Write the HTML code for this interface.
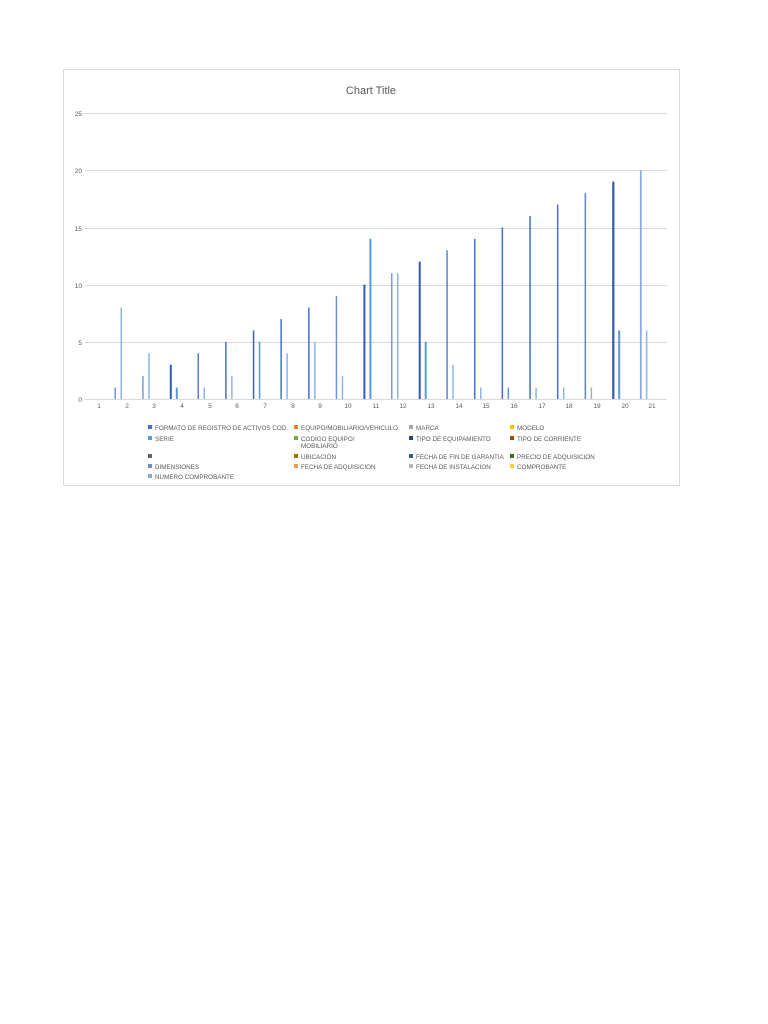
<!DOCTYPE html>
<html><head><meta charset="utf-8"><style>
html,body{margin:0;padding:0;background:#fff;width:768px;height:1024px;overflow:hidden}
svg{position:absolute;left:0;top:0}
text{font-family:"Liberation Sans",sans-serif}
</style></head><body>
<svg width="768" height="1024" viewBox="0 0 768 1024">
<rect x="63.5" y="69.5" width="616" height="416" fill="#fff" stroke="#d9d9d9"/>
<text x="371" y="94" font-size="11" fill="#595959" text-anchor="middle">Chart Title</text>
<g stroke="#d9d9d9" stroke-width="1">
<line x1="85" y1="113.5" x2="667" y2="113.5"/>
<line x1="85" y1="170.5" x2="667" y2="170.5"/>
<line x1="85" y1="228.5" x2="667" y2="228.5"/>
<line x1="85" y1="285.5" x2="667" y2="285.5"/>
<line x1="85" y1="342.5" x2="667" y2="342.5"/>
<line x1="85" y1="399.5" x2="667" y2="399.5"/>
</g>
<g font-size="6.5" fill="#595959" text-anchor="end">
<text x="82" y="116">25</text><text x="82" y="173">20</text><text x="82" y="231">15</text>
<text x="82" y="288">10</text><text x="82" y="345">5</text><text x="82" y="402">0</text>
</g>
<g font-size="6.5" fill="#595959" text-anchor="middle">
<text x="99" y="408">1</text><text x="127" y="408">2</text><text x="154" y="408">3</text><text x="182" y="408">4</text><text x="210" y="408">5</text><text x="237" y="408">6</text><text x="265" y="408">7</text><text x="293" y="408">8</text><text x="320" y="408">9</text><text x="348" y="408">10</text><text x="376" y="408">11</text><text x="403" y="408">12</text><text x="431" y="408">13</text><text x="459" y="408">14</text><text x="486" y="408">15</text><text x="514" y="408">16</text><text x="542" y="408">17</text><text x="569" y="408">18</text><text x="597" y="408">19</text><text x="625" y="408">20</text><text x="652" y="408">21</text>
</g>
<g>
<rect x="114.5" y="387.6" width="1.5" height="11.4" fill="#6f93d6"/><rect x="120.5" y="307.5" width="1.5" height="91.5" fill="#8ab7e8"/>
<rect x="142.2" y="376.1" width="1.5" height="22.9" fill="#7a9bd8"/><rect x="148.2" y="353.2" width="1.5" height="45.8" fill="#8ab7e8"/>
<rect x="169.8" y="364.7" width="2" height="34.3" fill="#2f5cb0"/><rect x="175.8" y="387.6" width="2" height="11.4" fill="#5b9bd5"/>
<rect x="197.5" y="353.2" width="1.5" height="45.8" fill="#5a82cf"/><rect x="203.5" y="387.6" width="1.5" height="11.4" fill="#8ab7e8"/>
<rect x="225.1" y="341.8" width="1.5" height="57.2" fill="#4472c4"/><rect x="231.1" y="376.1" width="1.5" height="22.9" fill="#8ab7e8"/>
<rect x="252.8" y="330.4" width="1.5" height="68.6" fill="#3e62a8"/><rect x="258.8" y="341.8" width="1.5" height="57.2" fill="#5b9bd5"/>
<rect x="280.4" y="319" width="1.5" height="80" fill="#4472c4"/><rect x="286.4" y="353.2" width="1.5" height="45.8" fill="#8ab7e8"/>
<rect x="308.1" y="307.5" width="1.5" height="91.5" fill="#4472c4"/><rect x="314.1" y="341.8" width="1.5" height="57.2" fill="#8ab7e8"/>
<rect x="335.7" y="296" width="1.5" height="103" fill="#6f93d6"/><rect x="341.7" y="376.1" width="1.5" height="22.9" fill="#8ab7e8"/>
<rect x="363.4" y="284.6" width="2" height="114.4" fill="#2f5cb0"/><rect x="369.4" y="238.8" width="2" height="160.2" fill="#5b9bd5"/>
<rect x="391" y="273.2" width="1.5" height="125.8" fill="#7a9bd8"/><rect x="397" y="273.2" width="1.5" height="125.8" fill="#8ab7e8"/>
<rect x="418.7" y="261.7" width="2" height="137.3" fill="#2f5cb0"/><rect x="424.7" y="341.8" width="2" height="57.2" fill="#5b9bd5"/>
<rect x="446.3" y="250.3" width="1.5" height="148.7" fill="#5a82cf"/><rect x="452.3" y="364.7" width="1.5" height="34.3" fill="#8ab7e8"/>
<rect x="474" y="238.8" width="1.5" height="160.2" fill="#4472c4"/><rect x="480" y="387.6" width="1.5" height="11.4" fill="#8ab7e8"/>
<rect x="501.6" y="227.4" width="1.5" height="171.6" fill="#4472c4"/><rect x="507.6" y="387.6" width="1.5" height="11.4" fill="#5b9bd5"/>
<rect x="529.3" y="216" width="1.5" height="183" fill="#4472c4"/><rect x="535.3" y="387.6" width="1.5" height="11.4" fill="#8ab7e8"/>
<rect x="556.9" y="204.5" width="1.5" height="194.5" fill="#4472c4"/><rect x="562.9" y="387.6" width="1.5" height="11.4" fill="#8ab7e8"/>
<rect x="584.6" y="193.1" width="1.5" height="205.9" fill="#5a82cf"/><rect x="590.6" y="387.6" width="1.5" height="11.4" fill="#8ab7e8"/>
<rect x="612.2" y="181.6" width="2.2" height="217.4" fill="#2f5cb0"/><rect x="618.2" y="330.4" width="2" height="68.6" fill="#5b9bd5"/>
<rect x="639.9" y="170.2" width="1.8" height="228.8" fill="#8aa9e0"/><rect x="645.9" y="330.4" width="1.5" height="68.6" fill="#8ab7e8"/>
</g>
<g font-size="6.3" fill="#595959">
<rect x="148" y="425" width="4" height="4" fill="#4472c4"/><text x="155" y="430">FORMATO DE REGISTRO DE ACTIVOS COD.</text>
<rect x="294" y="425" width="4" height="4" fill="#ed7d31"/><text x="301" y="430">EQUIPO/MOBILIARIO/VEHICULO</text>
<rect x="409" y="425" width="4" height="4" fill="#a5a5a5"/><text x="416" y="430">MARCA</text>
<rect x="510" y="425" width="4" height="4" fill="#ffc000"/><text x="517" y="430">MODELO</text>
<rect x="148" y="436" width="4" height="4" fill="#5b9bd5"/><text x="155" y="441">SERIE</text>
<rect x="294" y="436" width="4" height="4" fill="#70ad47"/><text x="301" y="441">CODIGO EQUIPO/</text><text x="301" y="448">MOBILIARIO</text>
<rect x="409" y="436" width="4" height="4" fill="#264478"/><text x="416" y="441">TIPO DE EQUIPAMIENTO</text>
<rect x="510" y="436" width="4" height="4" fill="#9e480e"/><text x="517" y="441">TIPO DE CORRIENTE</text>
<rect x="148" y="454" width="4" height="4" fill="#636363"/>
<rect x="294" y="454" width="4" height="4" fill="#997300"/><text x="301" y="459">UBICACIÓN</text>
<rect x="409" y="454" width="4" height="4" fill="#255e91"/><text x="416" y="459">FECHA DE FIN DE GARANTIA</text>
<rect x="510" y="454" width="4" height="4" fill="#43682b"/><text x="517" y="459">PRECIO DE ADQUISICION</text>
<rect x="148" y="464" width="4" height="4" fill="#698ed0"/><text x="155" y="469">DIMENSIONES</text>
<rect x="294" y="464" width="4" height="4" fill="#f1975a"/><text x="301" y="469">FECHA DE ADQUISICION</text>
<rect x="409" y="464" width="4" height="4" fill="#b7b7b7"/><text x="416" y="469">FECHA DE INSTALACION</text>
<rect x="510" y="464" width="4" height="4" fill="#ffcd33"/><text x="517" y="469">COMPROBANTE</text>
<rect x="148" y="474" width="4" height="4" fill="#7cafdd"/><text x="155" y="479">NUMERO COMPROBANTE</text>
</g>
</svg>
</body></html>
